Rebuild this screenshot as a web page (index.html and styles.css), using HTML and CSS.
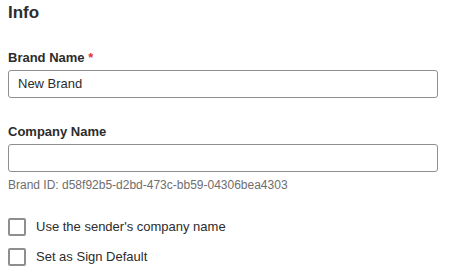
FILE: index.html
```html
<!DOCTYPE html>
<html>
<head>
<meta charset="utf-8">
<link rel="stylesheet" href="styles.css">
</head>
<body>
<div class="panel">
  <h2 class="title">Info</h2>
  <div class="field first">
    <label class="label">Brand Name <span class="req">*</span></label>
    <div class="input">New Brand</div>
  </div>
  <div class="field second">
    <label class="label">Company Name</label>
    <div class="input"></div>
    <div class="hint">Brand ID: d58f92b5-d2bd-473c-bb59-04306bea4303</div>
  </div>
  <div class="checks">
    <div class="check"><span class="box"></span><span>Use the sender's company name</span></div>
    <div class="check"><span class="box"></span><span>Set as Sign Default</span></div>
  </div>
</div>
</body>
</html>
```
FILE: styles.css
```css
html, body { margin: 0; padding: 0; background: #fff; }
body { font-family: "Liberation Sans", Arial, sans-serif; color: #2c2c2c; }
.panel { padding: 0 15px 0 8px; width: 430px; }
.title { margin: 0; padding-top: 3px; font-size: 17px; font-weight: bold; line-height: 20px; color: #2c2c2c; }
.field { display: flex; flex-direction: column; }
.field.first { margin-top: 27px; }
.field.second { margin-top: 26px; }
.label { font-size: 13px; font-weight: bold; line-height: 16px; color: #2c2c2c; margin-bottom: 4px; }
.req { color: #d7373f; }
.input { box-sizing: border-box; height: 28px; border: 1px solid #8e8e8e; border-radius: 3px; font-size: 13px; line-height: 26px; padding: 0 9px; color: #2c2c2c; }
.hint { font-size: 12px; color: #6e6e6e; line-height: 14px; margin-top: 6px; }
.checks { display: flex; flex-direction: column; gap: 12px; margin-top: 26px; }
.check { display: flex; align-items: center; gap: 10px; font-size: 13px; line-height: 18px; color: #2c2c2c; }
.box { box-sizing: border-box; width: 18px; height: 18px; border: 2px solid #8e8e8e; border-radius: 2px; }
```
